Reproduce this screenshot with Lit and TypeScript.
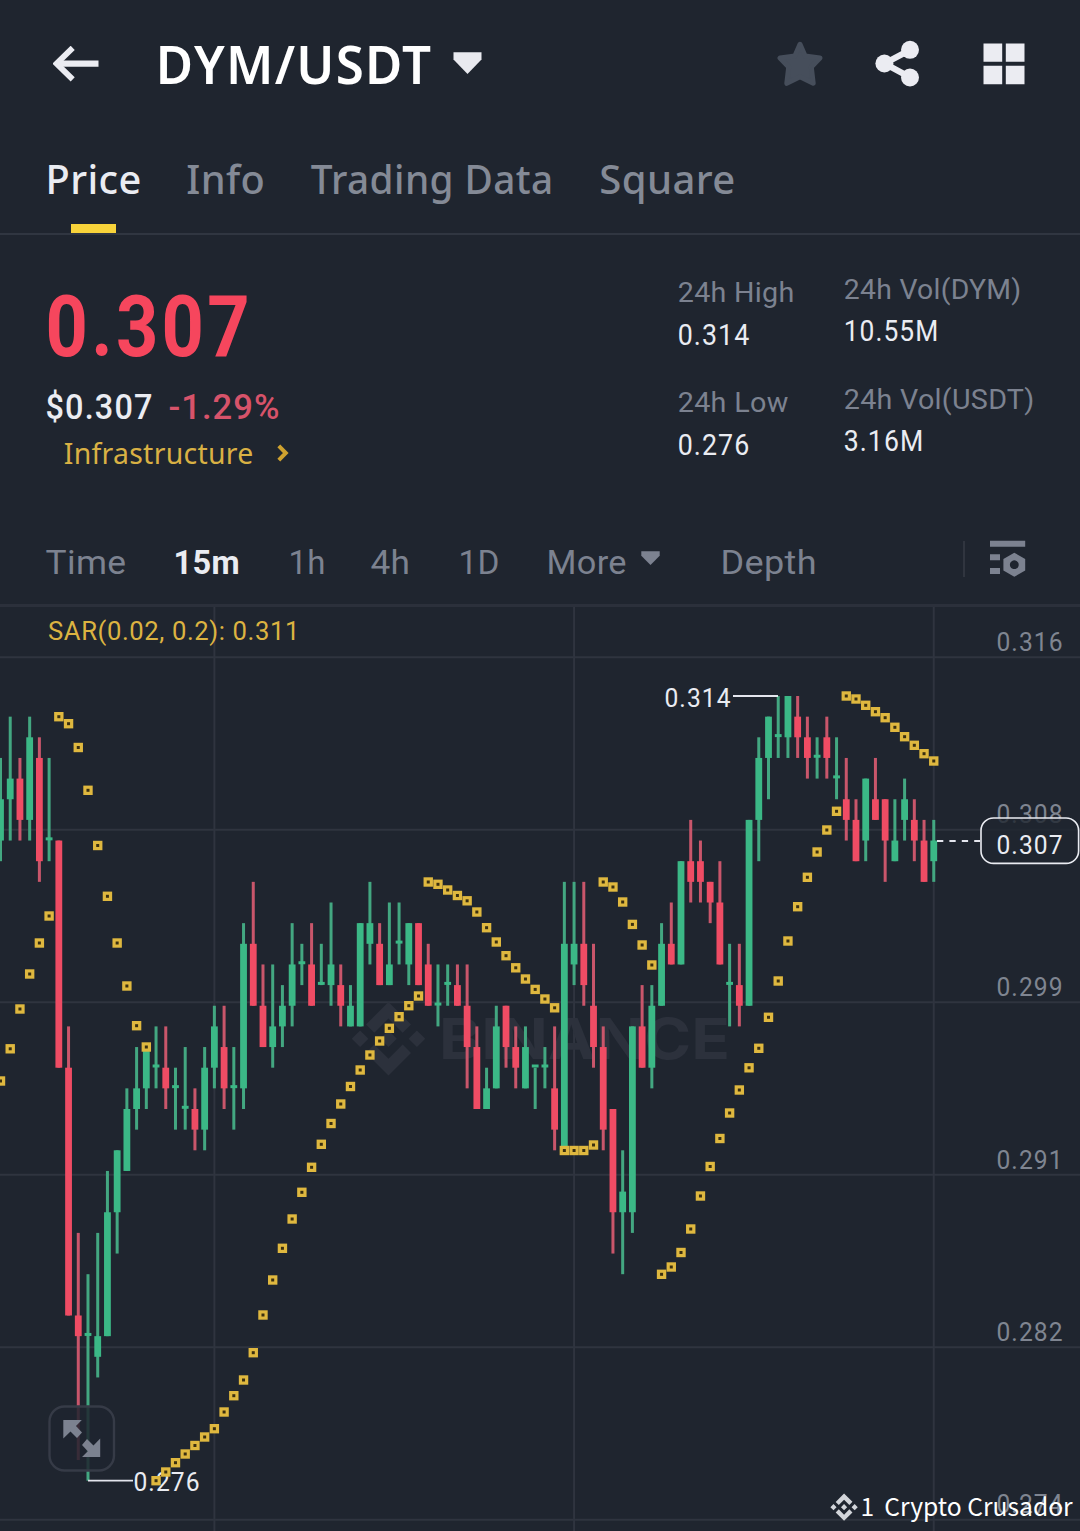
import { LitElement, html, svg, css } from "lit";
import { customElement, property } from "lit/decorators.js";

const FAMILIES: Record<string, string> = {
  roboto: `Roboto, "Noto Sans", sans-serif`,
  noto: `"Noto Sans", Roboto, sans-serif`,
};

const UP = "#3bb886";
const DOWN = "#ef4c64";
const LOGO =
  "M16.624 13.9202l2.7175 2.7154-7.353 7.353-7.353-7.352 2.7175-2.7164 4.6355 4.6595 4.6356-4.6595zm4.6366-4.6366L24 12l-2.7154 2.7164L18.5682 12l2.6924-2.7164zm-9.272.001l2.7163 2.6914-2.7164 2.7174v-.001L9.2721 12l2.7164-2.7154zm-9.2722-.001L5.4088 12l-2.6914 2.6924L0 12l2.7164-2.7164zM11.9885.0115l7.353 7.329-2.7174 2.7154-4.6356-4.6356-4.6355 4.6595-2.7174-2.7154 7.353-7.353z";

/* Single line of text set to an exact measure; the box's bottom edge is the baseline. */
@customElement("text-run")
export class TextRun extends LitElement {
  @property() label = "";
  @property({ type: Number }) w = 100;
  @property({ type: Number }) size = 28;
  @property({ type: Number }) weight = 400;
  @property({ type: Number }) bearing = 0.045;
  @property({ type: Number }) track = 0.01;
  @property() face = "roboto";

  static styles = css`
    :host { display: block; flex: none; }
    .box { display: block; overflow: visible; fill: currentColor; }
  `;

  render() {
    const b = this.size * this.bearing;
    const t = this.size * this.track;
    return html`<svg class="box" width=${this.w} height=${this.size}>
      <text x=${-b} y=${this.size} font-size=${this.size} font-weight=${this.weight}
        font-family=${FAMILIES[this.face]} letter-spacing=${t} textLength=${this.w - 1 + 2 * b + t * 0.9}
        lengthAdjust="spacingAndGlyphs">${this.label}</text>
    </svg>`;
  }
}

/* direction, high, body top, body bottom, low: ticks of 0.001 below 0.314 */
type Candle = [string, number, number, number, number];
const CANDLES: Candle[] = (
  "g3,5,7,8 g1,4,5,7 r3,4,6,7 g1,2,6,7 r2,3,8,9 g3,7,7,8 r7,7,18,18 r16,18,30,30 r26,30,31,37 g28,31,31,38 " +
  "g26,31,32,33 g23,25,31,31 g22,22,25,27 g19,20,23,23 g17,19,20,21 g17,17,19,20 g16,18,18,19 r16,18,19,20 g18,19,19,21 g17,20,20,21 " +
  "r19,20,21,22 g17,18,21,22 g15,16,18,19 r15,17,19,20 g17,19,19,21 g11,12,19,20 r9,12,15,15 r13,15,17,17 g13,16,17,18 g14,15,16,17 " +
  "g11,13,15,16 g12,13,13,14 r11,13,15,15 g12,14,14,14 g10,13,14,15 r13,14,15,16 g14,15,16,16 g11,11,16,16 g9,11,12,13 r11,12,14,14 " +
  "g10,13,14,14 g10,12,12,13 g11,11,13,14 r11,11,14,14 r12,13,15,15 g13,15,15,16 g13,14,14,15 r13,14,15,15 r13,15,17,19 r16,17,20,20 " +
  "g18,19,20,20 g15,16,19,19 r15,15,17,18 r16,17,18,19 g16,17,19,19 g18,18,18,20 g17,18,18,19 r16,19,21,22 g9,12,22,22 g9,12,13,14 " +
  "r9,12,14,15 r12,15,17,18 r16,17,21,22 r20,20,25,27 g22,24,25,28 g16,16,25,26 r14,16,18,18 g14,15,18,19 g11,12,15,15 r10,12,13,13 " +
  "g8,8,13,13 r6,8,9,10 r7,8,9,10 r9,9,10,11 r8,10,13,13 g12,14,14,16 r12,14,15,16 g6,6,15,15 g2,3,6,8 g1,1,3,5 " +
  "g0,2,2,3 g0,0,2,3 r0,1,2,3 r1,2,3,4 g2,3,3,4 r1,2,3,4 g2,4,4,5 r3,5,6,7 r5,6,8,8 g4,4,7,8 " +
  "r3,5,6,6 r5,5,7,9 g5,7,8,8 g4,5,6,7 r5,6,7,8 r6,7,9,9 g6,7,8,9"
)
  .split(" ")
  .map((s) => [s[0], ...s.slice(1).split(",").map(Number)] as Candle);

const SAR = [
  1081, 1048.8, 1009, 974, 943, 916, 716.7, 723.7, 747.5, 790.3, 845.5, 896.3, 943, 986, 1025.7, 1047,
  1480.7, 1472, 1462.7, 1454, 1445.5, 1437, 1428.7, 1412, 1395.7, 1380, 1352.7, 1315, 1280, 1248.3, 1219,
  1192.3, 1167.3, 1144.3, 1123.5, 1104, 1086.5, 1070, 1055, 1041, 1028.3, 1016.7, 1005.7, 996, 882, 884.3,
  890, 895.5, 900.8, 912, 927.7, 942, 955.7, 967.8, 979, 989.4, 999, 1007.8, 1150.5, 1150.5, 1150.5, 1145,
  882, 887, 902, 924.4, 945, 965, 1274.3, 1267, 1252.5, 1229, 1196, 1166.5, 1138.5, 1113, 1090, 1067.8,
  1048.3, 1017.3, 981, 941, 906.7, 877.3, 852, 830, 811.3, 696, 699, 705.3, 711.7, 717.7, 727.3, 736.7,
  745.3, 753.7, 761,
];

const cx = (i: number) => 0.5 + 9.7215 * i;
const py = (k: number) => 696 + 20.65 * k;

@customElement("price-chart")
export class PriceChart extends LitElement {
  static styles = css`
    :host { display: block; flex: 1; min-height: 0; }
    .plot { display: block; font-family: Roboto, "Noto Sans", sans-serif; font-size: 26px; }
    .grid { stroke: #2f343f; stroke-width: 2; }
    .edge { stroke: #2b303b; stroke-width: 3; }
    .mark { fill: #3a2f10; stroke: #dfb83f; stroke-width: 3.2; }
    .axis { fill: #7f8591; }
    .num { letter-spacing: 1.1px; }
    .lead { stroke: #e4e6ee; stroke-width: 1.8; fill: none; }
    .light { fill: #eaecf2; }
    .sar { fill: #dcb341; letter-spacing: 0.6px; }
    .ghost { fill: #2c313c; }
    .brand { font-family: Inter, Roboto, sans-serif; font-weight: 700; font-size: 57px; }
    .panel { fill: #1f252f; fill-opacity: 0.85; stroke: #363b47; stroke-width: 2.4; }
    .arrow { fill: #7c8290; }
    .pill { fill: #1f252f; fill-opacity: 0.8; stroke: #eaecf2; stroke-width: 1.6; }
    .credit { font-family: "Noto Sans CJK SC", "Noto Sans", sans-serif; font-size: 24.6px; fill: #fff; }
    .emblem { fill: #d2d5da; }
  `;

  private txt(x: number, y: number, w: number, s: string, cls: string) {
    return svg`<text class=${cls} x=${x} y=${y} textLength=${w} lengthAdjust="spacingAndGlyphs">${s}</text>`;
  }

  private candle([d, h, t, b, l]: Candle, i: number) {
    const x = cx(i);
    const color = d === "g" ? UP : DOWN;
    const wick = d === "g" ? "#43a781" : "#c9566b";
    const top = t === b ? py(b) - 3.2 : py(t);
    return svg`<rect x=${x - 1.5} y=${py(h)} width="3" height=${py(l) - py(h)} fill=${wick}></rect>
      <rect x=${x - 3.4} y=${top} width="6.8" height=${t === b ? 3 : py(b) - top} fill=${color}></rect>`;
  }

  render() {
    const rows = [657.2, 829.7, 1002.2, 1174.8, 1347.2, 1519.7];
    const prices = ["0.316", "0.308", "0.299", "0.291", "0.282", "0.274"];
    return html`<svg class="plot" width="1080" height="927" viewBox="0 604 1080 927">
      <path class="edge" d="M0 605.5H1080"></path>
      ${rows.map((y) => svg`<path class="grid" d="M0 ${y}H1080"></path>`)}
      ${[22, 59, 96].map((i) => svg`<path class="grid" d="M${cx(i)} 607V1531"></path>`)}
      <path class="ghost" transform="translate(351.8 1002) scale(3.06)" d=${LOGO}></path>
      <text class="ghost brand" x="439" y="1059.3" textLength="291" lengthAdjust="spacingAndGlyphs">BINANCE</text>
      ${rows.map((y, n) => this.txt(996.5, y - 6.3, 67, prices[n], "axis num"))}
      ${this.txt(48, 639.7, 252, "SAR(0.02, 0.2): 0.311", "sar")}
      ${CANDLES.map((c, i) => this.candle(c, i))}
      <path class="lead" d="M733 696H778M88 1480.7H133"></path>
      ${this.txt(664.5, 706.8, 67, "0.314", "light num")}
      ${this.txt(133.5, 1491, 67, "0.276", "light num")}
      ${SAR.map((y, i) => svg`<rect class="mark" x=${cx(i) - 3.1} y=${y - 3.1} width="6.2" height="6.2"></rect>`)}
      <path class="lead" stroke-dasharray="6.3 6.1" d="M937 841H980"></path>
      <rect class="pill" x="981" y="818" width="97.6" height="45.4" rx="12.5"></rect>
      ${this.txt(996.5, 854, 67, "0.307", "light num")}
      <rect class="panel" x="49.5" y="1406.5" width="64.5" height="64" rx="15"></rect>
      <path class="arrow" d="M63.3 1420H81.8L76 1426L82 1432.5L77 1438L70.5 1431.5L63.3 1438.5ZM100.2 1457H82L87.8 1451.2L82 1445L87 1439L93.5 1445.5L100.2 1438.5Z"></path>
      <path class="emblem" transform="translate(830.4 1493.5) scale(1.14)" d=${LOGO}></path>
      <text class="credit" x="860.5" y="1515.7">1</text>
      <text class="credit" x="884.2" y="1515.7" textLength="188.5" lengthAdjust="spacingAndGlyphs">Crypto Crusador</text>
    </svg>`;
  }
}

@customElement("app-root")
export class AppRoot extends LitElement {
  static styles = css`
    :host { display: flex; flex-direction: column; width: 1080px; height: 1531px; overflow: hidden;
      background: #1f252f; color: #eaecf2; }
    svg { display: block; flex: none; }
    .header { display: flex; align-items: flex-start; height: 128px; padding: 31px 55px 0 53px; box-sizing: border-box; }
    .back { margin: 15px 60px 0 0; }
    .title { color: #fff; }
    .caret { margin: 21px 0 0 24px; }
    .actions { display: flex; align-items: center; margin: 9px 0 0 auto; }
    .share { margin: 0 64px 0 52px; }
    .tabs { display: flex; align-items: flex-start; gap: 48px; height: 107px; padding: 24.5px 0 0 47.5px;
      box-sizing: border-box; border-bottom: 2px solid #303641; color: #848a96; }
    .tab { display: flex; flex-direction: column; align-items: center; gap: 31px; }
    .on { color: #eaecf2; }
    .bar { width: 45px; height: 9px; background: #f8d33a; }
    .summary { display: flex; height: 270px; }
    .quote { width: 630.5px; padding: 36px 0 0 48px; box-sizing: content-box; flex: none; }
    .last { color: #f6465d; }
    .change { display: flex; gap: 18px; margin: 28px 0 0 -1px; }
    .down { color: #d7536a; }
    .tag { display: flex; align-items: flex-end; gap: 24.5px; margin: 16.5px 0 0 16.5px; color: #d9b144; }
    .chev { margin-bottom: 2px; }
    .stats { display: flex; }
    .col { width: 166px; padding-top: 37.5px; display: flex; flex-direction: column; gap: 38px; }
    .col + .col { padding-top: 34.5px; }
    .stat { display: flex; flex-direction: column; gap: 14.5px; height: 72px; }
    .col + .col .stat { gap: 13.5px; }
    .muted { color: #7c8290; }
    .frames { display: flex; align-items: flex-end; height: 99px; box-sizing: border-box; padding: 0 54px 30.5px 46.5px; color: #7c8290; }
    .f15 { margin-left: 50px; }
    .f1 { margin-left: 51px; }
    .f4 { margin-left: 47px; }
    .fd { margin-left: 50px; }
    .fm { margin-left: 49px; }
    .more { margin: 0 0 9px 15px; }
    .depth { margin-left: 62px; }
    .rule { width: 2.5px; height: 36px; margin: 0 25px -3.5px auto; background: #30353f; }
    .tune { margin-bottom: -3.5px; }
  `;

  private stat(name: string, nw: number, value: string, vw: number) {
    return html`<div class="stat">
      <text-run class="muted" label=${name} w=${nw} size="28.5"></text-run>
      <text-run label=${value} w=${vw} size="29" track="0.04"></text-run>
    </div>`;
  }

  render() {
    return html`
      <div class="header">
        <svg class="back" width="46" height="36" viewBox="53 46 46 36" fill="none" stroke="#ebecf2">
          <path d="M98.5 63.6H57" stroke-width="6.4"></path>
          <path d="M72.7 47.8L56.5 63.6L72.7 79.4" stroke-width="5.8"></path>
        </svg>
        <text-run class="title" label="DYM/USDT" w="270" size="53" weight="600" face="noto" bearing="0.06" track="0.025"></text-run>
        <svg class="caret" width="29" height="23" viewBox="0 0 29 23" fill="#e9eaf0">
          <path d="M.5 .3H28.5V7.5L14.5 22L.5 7.5Z"></path>
        </svg>
        <div class="actions">
          <svg width="46" height="47" viewBox="0 0 46 47" fill="#464e5b" stroke="#464e5b" stroke-width="5" stroke-linejoin="round">
            <path d="M23 4.3L28.1 16L43 18L34.3 27L36.2 43.3L23 36.8L9.8 43.3L11.7 27L3 18L17.9 16Z"></path>
          </svg>
          <svg class="share" width="44" height="47" viewBox="875 40 44 47" fill="#ebecf2">
            <path d="M910 50L884.5 63.5L910 77.3" fill="none" stroke="#ebecf2" stroke-width="6.2"></path>
            <circle cx="910" cy="49.8" r="9"></circle>
            <circle cx="884.4" cy="63.5" r="9"></circle>
            <circle cx="910" cy="77.5" r="9"></circle>
          </svg>
          <svg width="42" height="42" viewBox="0 0 42 42" fill="#ebecf2">
            <path d="M.5 .5h18.7v18.2H.5zM22.8 .5h18.7v18.2H22.8zM.5 22.8h18.7V41.2H.5zM22.8 22.8h18.7V41.2H22.8z"></path>
          </svg>
        </div>
      </div>

      <div class="tabs">
        <div class="tab on">
          <text-run label="Price" w="92" size="40.5" weight="500" face="noto" bearing="0.06"></text-run>
          <div class="bar"></div>
        </div>
        <div class="tab"><text-run label="Info" w="76" size="40.5" weight="500" face="noto"></text-run></div>
        <div class="tab"><text-run label="Trading Data" w="241" size="40.5" weight="500" face="noto" bearing="0.03"></text-run></div>
        <div class="tab"><text-run label="Square" w="133.5" size="40.5" weight="500" face="noto"></text-run></div>
      </div>

      <div class="summary">
        <div class="quote">
          <text-run class="last" label="0.307" w="200" size="85" weight="700" bearing="0.03" track="0.045"></text-run>
          <div class="change">
            <text-run label="$0.307" w="105" size="34.5" weight="500" track="0.035"></text-run>
            <text-run class="down" label="-1.29%" w="109" size="34.5" weight="500" track="0.03"></text-run>
          </div>
          <div class="tag">
            <text-run label="Infrastructure" w="188" size="28.5" face="noto"></text-run>
            <svg class="chev" width="12" height="18" viewBox="0 0 12 18" fill="none" stroke="#cfa22f" stroke-width="4">
              <path d="M1.8 1.8L8.8 9L1.8 16.2"></path>
            </svg>
          </div>
        </div>
        <div class="stats">
          <div class="col">
            ${this.stat("24h High", 115, "0.314", 70)} ${this.stat("24h Low", 109, "0.276", 70)}
          </div>
          <div class="col">
            ${this.stat("24h Vol(DYM)", 176, "10.55M", 93)} ${this.stat("24h Vol(USDT)", 189, "3.16M", 78)}
          </div>
        </div>
      </div>

      <div class="frames">
        <text-run label="Time" w="78.5" size="34"></text-run>
        <text-run class="f15 on" label="15m" w="64" size="34" weight="700"></text-run>
        <text-run class="f1" label="1h" w="35" size="34"></text-run>
        <text-run class="f4" label="4h" w="37.5" size="34"></text-run>
        <text-run class="fd" label="1D" w="39" size="34"></text-run>
        <text-run class="fm" label="More" w="78" size="34"></text-run>
        <svg class="more" width="19" height="14" viewBox="0 0 19 14" fill="#7c8290">
          <path d="M.3 .2H18.7V4.8L9.5 14L.3 4.8Z"></path>
        </svg>
        <text-run class="depth" label="Depth" w="94" size="34"></text-run>
        <div class="rule"></div>
        <svg class="tune" width="36" height="37" viewBox="0 0 36 37" fill="#7c8290">
          <path d="M0 .7H35.2V6.8H0zM0 14.3H10V20.2H0zM0 28H10V34H0z"></path>
          <path fill-rule="evenodd" d="M24.3 12.7L35.2 19V30.4L24.3 36.8L13.4 30.4V19ZM24.3 20.3a4.4 4.4 0 1 0 .01 0Z"></path>
        </svg>
      </div>

      <price-chart></price-chart>
    `;
  }
}
